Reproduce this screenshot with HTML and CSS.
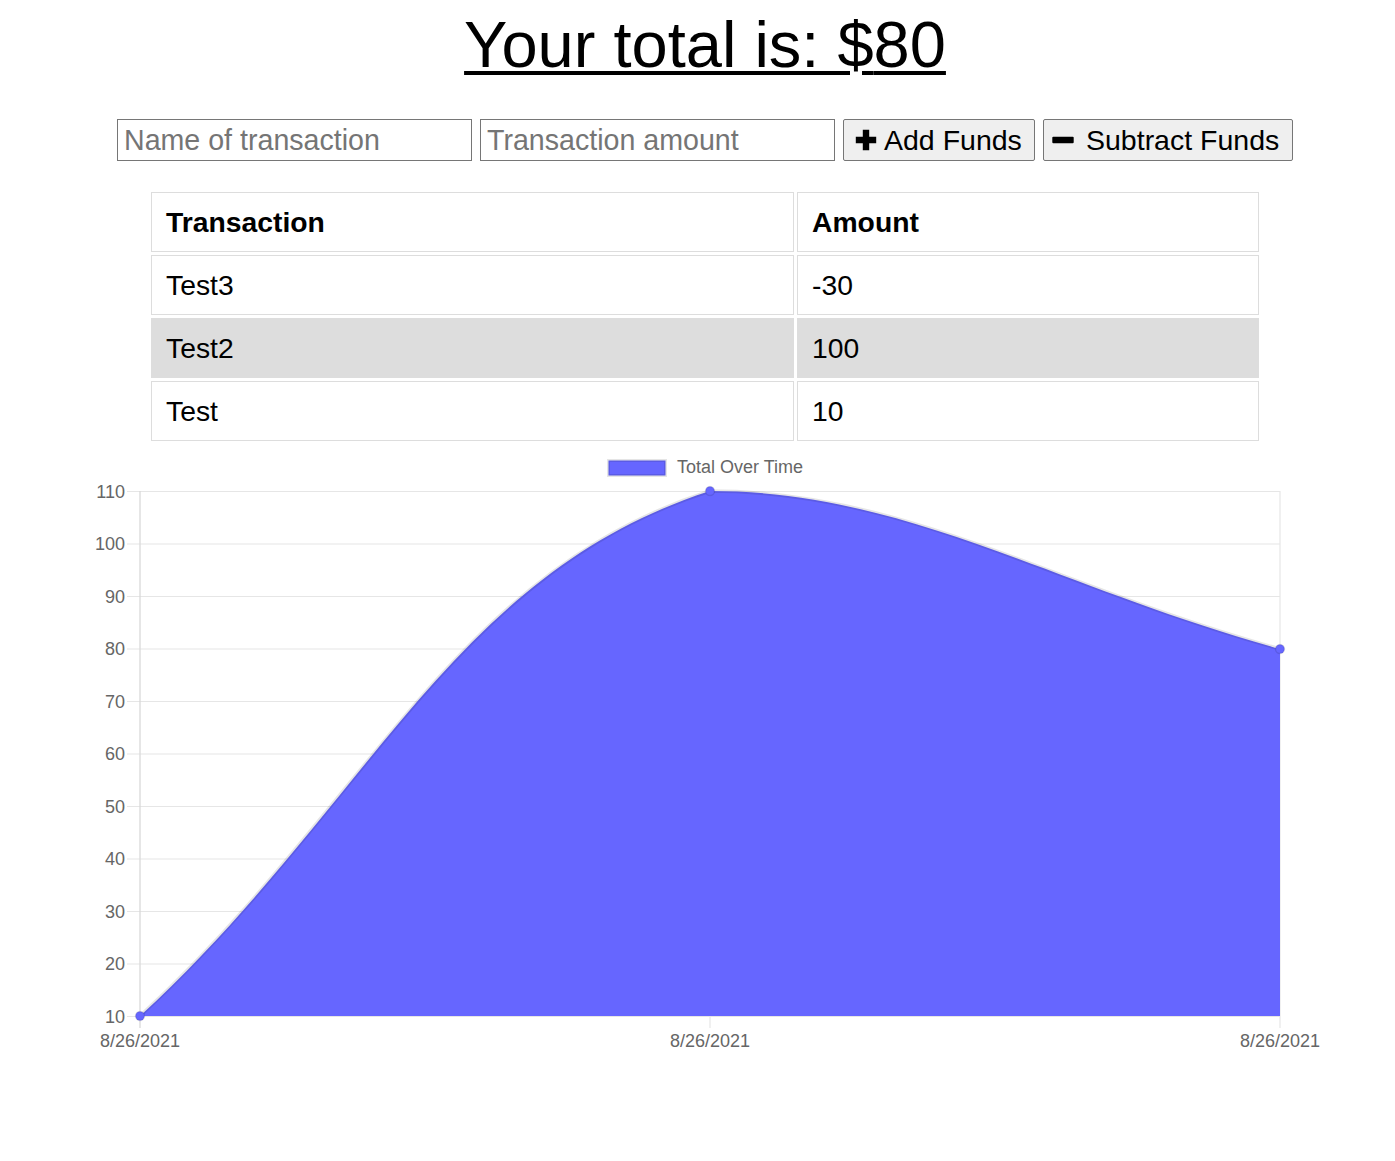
FILE: index.html
```html
<!DOCTYPE html>
<html lang="en">
<head>
<meta charset="utf-8">
<title>Budget Tracker</title>
<link rel="stylesheet" href="styles.css">
</head>
<body>
<div class="page">
  <h1 class="total">Your total is: $<span class="total-amount">80</span></h1>
  <div class="form">
    <input class="field" type="text" placeholder="Name of transaction">
    <input class="field" type="number" placeholder="Transaction amount">
    <button class="btn btn-add" type="button">
      <svg class="icon" viewBox="0 0 22 22" aria-hidden="true"><path d="M7.8 0.8h6.4v7h7v6.4h-7v7h-6.4v-7h-7v-6.4h7z" fill="#000"/></svg>
      <span>Add Funds</span>
    </button>
    <button class="btn btn-sub" type="button">
      <svg class="icon" viewBox="0 0 22 22" aria-hidden="true"><rect x="0.3" y="7.8" width="21.4" height="6.4" rx="1" fill="#000"/></svg>
      <span>Subtract Funds</span>
    </button>
  </div>
  <table class="tx-table">
    <colgroup><col class="col-name"><col class="col-amount"></colgroup>
    <thead>
      <tr><th>Transaction</th><th>Amount</th></tr>
    </thead>
    <tbody>
      <tr><td>Test3</td><td>-30</td></tr>
      <tr class="alt"><td>Test2</td><td>100</td></tr>
      <tr><td>Test</td><td>10</td></tr>
    </tbody>
  </table>
</div>
<div class="chart">
  <svg class="chart-svg" width="1395" height="640" viewBox="0 444 1395 640">
    <!-- legend -->
    <rect x="608.5" y="460.5" width="57" height="15" fill="#6666ff" stroke="rgba(0,0,0,0.1)" stroke-width="3"/>
    <text class="lbl" x="677" y="473">Total Over Time</text>
    <!-- grid -->
    <g stroke="#e6e6e6" stroke-width="1.2">
      <line x1="127" y1="491.5" x2="1280" y2="491.5"/>
      <line x1="127" y1="544" x2="1280" y2="544"/>
      <line x1="127" y1="596.5" x2="1280" y2="596.5"/>
      <line x1="127" y1="649" x2="1280" y2="649"/>
      <line x1="127" y1="701.5" x2="1280" y2="701.5"/>
      <line x1="127" y1="754" x2="1280" y2="754"/>
      <line x1="127" y1="806.5" x2="1280" y2="806.5"/>
      <line x1="127" y1="859" x2="1280" y2="859"/>
      <line x1="127" y1="911.5" x2="1280" y2="911.5"/>
      <line x1="127" y1="964" x2="1280" y2="964"/>
      <line x1="127" y1="1016.5" x2="1280" y2="1016.5"/>
      <line x1="710" y1="491" x2="710" y2="1028"/>
      <line x1="1280" y1="491" x2="1280" y2="1028"/>
    </g>
    <line x1="140" y1="491" x2="140" y2="1028" stroke="#d9d9d9" stroke-width="1.3"/>
    <!-- area -->
    <path d="M140,1016 C368,806 451.4,574.2 710,491 C907.4,491 1052,585.8 1280,649 L1280,1016 L140,1016 Z" fill="#6666ff"/>
    <path d="M140,1016 C368,806 451.4,574.2 710,491 C907.4,491 1052,585.8 1280,649" fill="none" stroke="rgba(0,0,0,0.1)" stroke-width="3.5"/>
    <g fill="#6666ff" stroke="rgba(0,0,0,0.1)" stroke-width="1.5">
      <circle cx="140" cy="1016" r="4.5"/>
      <circle cx="710" cy="491" r="4.5"/>
      <circle cx="1280" cy="649" r="4.5"/>
    </g>
    <!-- y ticks -->
    <g class="lbl" text-anchor="end">
      <text x="125" y="497.5">110</text>
      <text x="125" y="550">100</text>
      <text x="125" y="602.5">90</text>
      <text x="125" y="655">80</text>
      <text x="125" y="707.5">70</text>
      <text x="125" y="760">60</text>
      <text x="125" y="812.5">50</text>
      <text x="125" y="865">40</text>
      <text x="125" y="917.5">30</text>
      <text x="125" y="970">20</text>
      <text x="125" y="1022.5">10</text>
    </g>
    <!-- x ticks -->
    <g class="lbl" text-anchor="middle">
      <text x="140" y="1047">8/26/2021</text>
      <text x="710" y="1047">8/26/2021</text>
      <text x="1280" y="1047">8/26/2021</text>
    </g>
  </svg>
</div>
</body>
</html>
```

FILE: styles.css
```css
html, body {
  margin: 0;
  padding: 0;
  background: #fff;
}

body {
  font-family: "Liberation Sans", Arial, sans-serif;
  color: #000;
}

.page {
  width: 1395px;
  box-sizing: border-box;
  padding-left: 15px;
}

.total {
  margin: 0;
  font-size: 65px;
  font-weight: normal;
  line-height: 89px;
  text-align: center;
  text-decoration: underline;
  text-decoration-thickness: 4px;
  text-underline-offset: 4px;
}

.form {
  display: flex;
  justify-content: center;
  align-items: flex-start;
  gap: 8px;
  margin-top: 30px;
}

.field {
  box-sizing: border-box;
  width: 355px;
  height: 42px;
  margin: 0;
  padding: 0 6px;
  border: 1px solid #767676;
  border-radius: 0;
  font-family: "Liberation Sans", Arial, sans-serif;
  font-size: 28.6px;
  color: #000;
  background: #fff;
}

.field::placeholder {
  color: #757575;
}

.btn {
  box-sizing: border-box;
  height: 42px;
  margin: 0;
  display: inline-flex;
  align-items: center;
  border: 1px solid #767676;
  border-radius: 2px;
  background: #efefef;
  font-family: "Liberation Sans", Arial, sans-serif;
  font-size: 28.5px;
  color: #000;
}

.btn-add {
  width: 192px;
  padding: 0 0 0 11px;
  gap: 7px;
}

.btn-sub {
  width: 250px;
  padding: 0 0 0 8px;
  gap: 12px;
}

.icon {
  width: 22px;
  height: 22px;
  flex: none;
}

.tx-table {
  margin: 28px auto 0;
  width: 1114px;
  table-layout: fixed;
  border-collapse: separate;
  border-spacing: 3px;
}

.col-name { width: 643px; }
.col-amount { width: 462px; }

.tx-table th,
.tx-table td {
  box-sizing: border-box;
  height: 60px;
  padding: 0 14px;
  border: 1px solid #dddddd;
  font-size: 28.3px;
  text-align: left;
  vertical-align: middle;
}

.tx-table th {
  font-weight: bold;
}

.tx-table tr.alt td {
  background: #dddddd;
}

.chart {
  width: 1395px;
}

.chart-svg {
  display: block;
}

.lbl {
  font-family: "Liberation Sans", Arial, sans-serif;
  font-size: 18px;
  fill: #666;
}
```
